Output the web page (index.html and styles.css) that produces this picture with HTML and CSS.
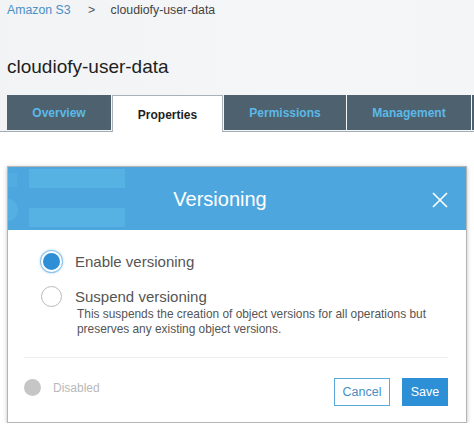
FILE: index.html
```html
<!DOCTYPE html>
<html>
<head>
<meta charset="utf-8">
<link rel="stylesheet" href="styles.css">
</head>
<body>
<div class="top">
  <div class="crumbs">
    <a class="crumb-link">Amazon S3</a>
    <span class="crumb-sep">&gt;</span>
    <span class="crumb-cur">cloudiofy-user-data</span>
  </div>
  <h1 class="title">cloudiofy-user-data</h1>
  <div class="tabs">
    <div class="tab tab-overview">Overview</div>
    <div class="tab tab-active tab-properties">Properties</div>
    <div class="tab tab-permissions">Permissions</div>
    <div class="tab tab-management">Management</div>
    <div class="tab tab-more"></div>
  </div>
</div>

<div class="modal">
  <div class="modal-head">
    <div class="deco deco-a"></div>
    <div class="deco deco-b"></div>
    <div class="deco deco-c"></div>
    <div class="deco deco-d"></div>
    <div class="modal-title">Versioning</div>
    <svg class="close" width="16" height="16" viewBox="0 0 16 16">
      <path d="M1 1 L15 15 M15 1 L1 15" stroke="#fff" stroke-width="1.6" fill="none"/>
    </svg>
  </div>
  <div class="modal-body">
    <div class="options">
      <div class="opt">
        <span class="radio radio-on"></span>
        <span class="opt-label">Enable versioning</span>
      </div>
      <div class="opt opt-second">
        <span class="radio"></span>
        <span class="opt-label">Suspend versioning</span>
      </div>
      <p class="desc">This suspends the creation of object versions for all operations but preserves any existing object versions.</p>
    </div>
    <div class="divider"></div>
    <div class="footer">
      <div class="status">
        <span class="status-dot"></span>
        <span class="status-text">Disabled</span>
      </div>
      <div class="actions">
        <button class="btn btn-cancel">Cancel</button>
        <button class="btn btn-save">Save</button>
      </div>
    </div>
  </div>
</div>
</body>
</html>
```
FILE: styles.css
```css
html, body {
  margin: 0;
  padding: 0;
  background: #ffffff;
  font-family: "Liberation Sans", Arial, sans-serif;
}

.top {
  background: linear-gradient(90deg, #f1f3f4 0%, #f5f6f7 60%, #f3f5f6 100%);
  padding-top: 2px;
}

.crumbs {
  padding-left: 7px;
  font-size: 12.3px;
  line-height: 16px;
  height: 16px;
  white-space: nowrap;
}

.crumb-link {
  color: #4a8fc6;
}

.crumb-sep {
  color: #555;
  margin: 0 12px 0 14px;
}

.crumb-cur {
  color: #444;
}

.title {
  margin: 37px 0 16px 7px;
  font-size: 19px;
  line-height: 24px;
  font-weight: normal;
  color: #1e1e1e;
}

.tabs {
  display: flex;
  gap: 1px;
  padding-left: 7px;
  padding-bottom: 1px;
  border-bottom: 1px solid #a3acb3;
  height: 35px;
}

.tab {
  box-sizing: border-box;
  height: 35px;
  background: #4e616f;
  color: #5bb9e8;
  font-size: 12px;
  font-weight: bold;
  display: flex;
  align-items: center;
  justify-content: center;
  flex: none;
}

.tab-overview { width: 104px; }
.tab-properties { width: 111px; }
.tab-permissions { width: 122px; }
.tab-management { width: 124px; }
.tab-more { width: 20px; }

.tab-active {
  background: #ffffff;
  color: #1e1e1e;
  border: 1px solid #a9b2b9;
  border-bottom: none;
  height: 37px;
  padding-top: 1px;
  margin-bottom: -2px;
  position: relative;
}

.modal {
  margin: 34px 0 0 7px;
  width: 460px;
  box-sizing: border-box;
  border: 1px solid #b5b5b5;
  box-shadow: 0 1px 4px rgba(0, 0, 0, 0.25);
  background: #fff;
}

.modal-head {
  position: relative;
  height: 63px;
  background: #4da7de;
  display: flex;
  align-items: center;
  padding-right: 18px;
  overflow: hidden;
}

.deco {
  position: absolute;
  background: #57b2e4;
}

.deco-a { left: 21px; top: 2px; width: 96px; height: 19px; }
.deco-b { left: 21px; top: 41px; width: 96px; height: 19px; }
.deco-c { left: -10px; top: 32px; width: 20px; height: 22px; border-radius: 50%; background: #54afe2; }
.deco-d { left: 0; top: 6px; width: 9px; height: 14px; background: #52ace1; }

.modal-title {
  position: relative;
  flex: 1;
  text-align: center;
  color: #fff;
  font-size: 20px;
  line-height: 24px;
}

.close {
  position: relative;
  flex: none;
  margin-top: 2px;
}

.modal-body {
  padding: 21px 18px 16px 16px;
}

.options {
  padding-left: 17px;
}

.opt {
  display: flex;
  align-items: center;
  gap: 13px;
  height: 21px;
}

.opt-second {
  margin-top: 14px;
}

.radio {
  box-sizing: border-box;
  width: 21px;
  height: 21px;
  border-radius: 50%;
  border: 1px solid #b9b9b9;
  background: #fff;
  flex: none;
}

.radio-on {
  background: #2e8fd7;
  border: 2px solid #ffffff;
  box-shadow: 0 0 0 1px #8cc2ec, 0 0 3px 1px #b7dbf5;
}

.opt-label {
  font-size: 15px;
  line-height: 21px;
  color: #555;
}

.desc {
  margin: 0;
  padding-left: 36px;
  font-size: 11.9px;
  line-height: 15px;
  color: #555;
  width: 360px;
}

.divider {
  margin-top: 20px;
  height: 1px;
  background: #ececec;
}

.footer {
  display: flex;
  justify-content: space-between;
  align-items: flex-start;
  padding-top: 20px;
}

.status {
  display: flex;
  align-items: center;
  gap: 12px;
  height: 17px;
  margin-top: 1px;
}

.status-dot {
  width: 17px;
  height: 17px;
  border-radius: 50%;
  background: #c6c6c6;
}

.status-text {
  font-size: 12px;
  color: #b9b9b9;
}

.actions {
  display: flex;
  gap: 12px;
}

.btn {
  box-sizing: border-box;
  height: 28px;
  font-family: "Liberation Sans", Arial, sans-serif;
  font-size: 12.5px;
  border-radius: 0;
  padding: 0;
  margin: 0;
}

.btn-cancel {
  width: 56px;
  background: #fff;
  border: 1px solid #5aa9dd;
  color: #4a8ec4;
}

.btn-save {
  width: 46px;
  background: #2d8fd6;
  border: 1px solid #2d8fd6;
  color: #fff;
}
```
